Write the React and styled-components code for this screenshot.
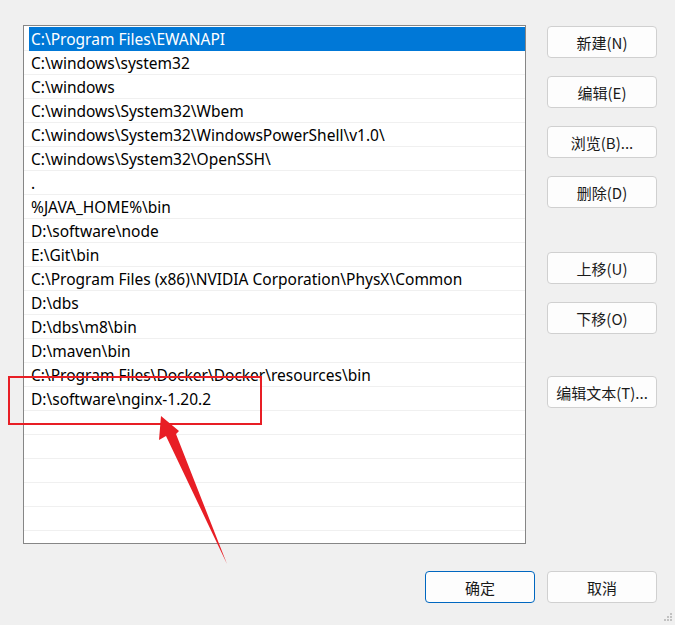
import styled, { createGlobalStyle } from "styled-components";

const GlobalStyle = createGlobalStyle`
  html, body {
    margin: 0;
    padding: 0;
    background: #f0f0f0;
  }
  body {
    font-family: "Noto Sans", "Noto Sans CJK SC", sans-serif;
  }
`;

const Dialog = styled.div`
  position: relative;
  width: 675px;
  height: 625px;
  box-sizing: border-box;
  padding: 25px 0 0 23px;
  display: grid;
  grid-template-columns: 503px 110px;
  grid-template-rows: 519px auto;
  column-gap: 21px;
  overflow: hidden;
`;

const List = styled.div`
  box-sizing: border-box;
  border: 1px solid #868686;
  background: #ffffff;
  padding-top: 1px;
  overflow: hidden;
`;

const Row = styled.div`
  display: flex;
  height: 24px;
  box-shadow: inset 0 -1px #f0f0f0;
`;

const Label = styled.div`
  flex: 1;
  margin-left: 5px;
  padding-left: 2px;
  line-height: 25px;
  font-size: 15.5px;
  white-space: nowrap;
  color: ${(p) => (p.$selected ? "#ffffff" : "#000000")};
  background: ${(p) => (p.$selected ? "#0078d7" : "transparent")};
`;

const SideColumn = styled.div`
  display: flex;
  flex-direction: column;
`;

const Button = styled.button`
  width: 110px;
  height: 32px;
  margin-top: ${(p) => p.$gap || 0}px;
  box-sizing: border-box;
  border: 1px solid ${(p) => (p.$primary ? "#0067c0" : "#d0d0d0")};
  border-radius: 4px;
  background: #fdfdfd;
  font-family: "Noto Sans CJK SC", "Noto Sans", sans-serif;
  font-size: 15px;
  color: #1a1a1a;
  padding: 0;
`;

const Footer = styled.div`
  grid-column: 1 / 3;
  display: flex;
  justify-content: flex-end;
  gap: 12px;
  margin-top: 27px;
`;

const Overlay = styled.svg`
  position: absolute;
  left: 0;
  top: 0;
  pointer-events: none;
`;

const paths = [
  "C:\\Program Files\\EWANAPI",
  "C:\\windows\\system32",
  "C:\\windows",
  "C:\\windows\\System32\\Wbem",
  "C:\\windows\\System32\\WindowsPowerShell\\v1.0\\",
  "C:\\windows\\System32\\OpenSSH\\",
  ".",
  "%JAVA_HOME%\\bin",
  "D:\\software\\node",
  "E:\\Git\\bin",
  "C:\\Program Files (x86)\\NVIDIA Corporation\\PhysX\\Common",
  "D:\\dbs",
  "D:\\dbs\\m8\\bin",
  "D:\\maven\\bin",
  "C:\\Program Files\\Docker\\Docker\\resources\\bin",
  "D:\\software\\nginx-1.20.2",
];

const rows = [...paths, ...Array(6).fill("")];

const sideButtons = [
  { label: "新建(N)", gap: 1 },
  { label: "编辑(E)", gap: 18 },
  { label: "浏览(B)...", gap: 18 },
  { label: "删除(D)", gap: 18 },
  { label: "上移(U)", gap: 44 },
  { label: "下移(O)", gap: 18 },
  { label: "编辑文本(T)...", gap: 42 },
];

export default function App() {
  return (
    <>
      <GlobalStyle />
      <Dialog>
        <List>
          {rows.map((text, i) => (
            <Row key={i}>
              <Label $selected={i === 0}>{text}</Label>
            </Row>
          ))}
        </List>
        <SideColumn>
          {sideButtons.map((b) => (
            <Button key={b.label} $gap={b.gap}>
              {b.label}
            </Button>
          ))}
        </SideColumn>
        <Footer>
          <Button $primary>确定</Button>
          <Button>取消</Button>
        </Footer>
        <Overlay width="675" height="625" viewBox="0 0 675 625">
          <rect x="9" y="377" width="252" height="47" fill="none" stroke="#e81e25" strokeWidth="2" />
          <polygon
            points="161,416 179,431 176,434 227,564 166,436 159,440"
            fill="#e81e25"
          />
          <g fill="#c2c2c2">
            <rect x="670" y="613" width="2" height="2" />
            <rect x="667" y="616" width="2" height="2" />
            <rect x="670" y="616" width="2" height="2" />
            <rect x="664" y="619" width="2" height="2" />
            <rect x="667" y="619" width="2" height="2" />
            <rect x="670" y="619" width="2" height="2" />
          </g>
        </Overlay>
      </Dialog>
    </>
  );
}
